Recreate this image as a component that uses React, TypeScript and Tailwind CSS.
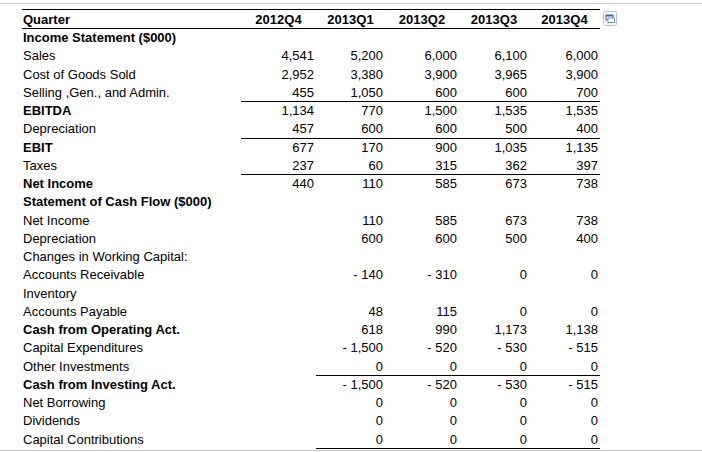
import React from 'react';

type Row = {
  label: string;
  bold?: boolean;
  values?: string[];
  line?: 'income' | 'cash';
};

const quarters = ['2012Q4', '2013Q1', '2013Q2', '2013Q3', '2013Q4'];

const rows: Row[] = [
  { label: 'Income Statement ($000)', bold: true },
  { label: 'Sales', values: ['4,541', '5,200', '6,000', '6,100', '6,000'] },
  { label: 'Cost of Goods Sold', values: ['2,952', '3,380', '3,900', '3,965', '3,900'] },
  { label: 'Selling ,Gen., and Admin.', values: ['455', '1,050', '600', '600', '700'], line: 'income' },
  { label: 'EBITDA', bold: true, values: ['1,134', '770', '1,500', '1,535', '1,535'] },
  { label: 'Depreciation', values: ['457', '600', '600', '500', '400'], line: 'income' },
  { label: 'EBIT', bold: true, values: ['677', '170', '900', '1,035', '1,135'] },
  { label: 'Taxes', values: ['237', '60', '315', '362', '397'], line: 'income' },
  { label: 'Net Income', bold: true, values: ['440', '110', '585', '673', '738'] },
  { label: 'Statement of Cash Flow ($000)', bold: true },
  { label: 'Net Income', values: ['', '110', '585', '673', '738'] },
  { label: 'Depreciation', values: ['', '600', '600', '500', '400'] },
  { label: 'Changes in Working Capital:' },
  { label: 'Accounts Receivable', values: ['', '- 140', '- 310', '0', '0'] },
  { label: 'Inventory' },
  { label: 'Accounts Payable', values: ['', '48', '115', '0', '0'] },
  { label: 'Cash from Operating Act.', bold: true, values: ['', '618', '990', '1,173', '1,138'] },
  { label: 'Capital Expenditures', values: ['', '- 1,500', '- 520', '- 530', '- 515'] },
  { label: 'Other Investments', values: ['', '0', '0', '0', '0'], line: 'cash' },
  { label: 'Cash from Investing Act.', bold: true, values: ['', '- 1,500', '- 520', '- 530', '- 515'] },
  { label: 'Net Borrowing', values: ['', '0', '0', '0', '0'] },
  { label: 'Dividends', values: ['', '0', '0', '0', '0'] },
  { label: 'Capital Contributions', values: ['', '0', '0', '0', '0'], line: 'cash' },
];

const grid = 'grid grid-cols-[219px_75px_69px_74px_70px_71px]';

function PopoutIcon() {
  return (
    <svg width="14" height="15" viewBox="0 0 14 15">
      <rect x="0.5" y="0.5" width="13" height="14" rx="2" fill="#fff" stroke="#a8c0f2" />
      <rect x="3" y="4" width="7" height="5" fill="#fff" stroke="#3e63c9" />
      <rect x="3" y="4" width="7" height="1.5" fill="#3e63c9" />
      <rect x="5" y="7" width="6.5" height="4.5" fill="#fff" stroke="#7d8fb8" />
    </svg>
  );
}

export default function App() {
  return (
    <div className="w-[702px] h-[452px] bg-white pt-[3px] text-[13px] text-black [font-family:'Liberation_Sans',Arial,sans-serif]">
      <div className="h-[448px] border-t border-b border-[#c8c8c8]">
        <div className="relative ml-[22px] mt-[5px] w-[578px]">
          {/* header */}
          <div className={`${grid} h-[20px] border-t border-b border-black font-bold items-center`}>
            <div className="pl-[1px]">Quarter</div>
            {quarters.map((q) => (
              <div key={q} className="text-center">{q}</div>
            ))}
          </div>
          <div className="absolute left-[581px] top-[2px]">
            <PopoutIcon />
          </div>

          {/* body */}
          {rows.map((r, i) => (
            <div key={i} className={`${grid} h-[18.26px] leading-[17px]`}>
              <div className={`pl-[1px] whitespace-nowrap ${r.bold ? 'font-bold' : ''}`}>{r.label}</div>
              {[0, 1, 2, 3, 4].map((c) => {
                const ruled =
                  (r.line === 'income') || (r.line === 'cash' && c > 0);
                return (
                  <div
                    key={c}
                    className={`text-right pr-[2px] whitespace-pre ${ruled ? 'border-b border-black' : ''}`}
                  >
                    {r.values ? r.values[c] : ''}
                  </div>
                );
              })}
            </div>
          ))}
        </div>
      </div>
    </div>
  );
}
